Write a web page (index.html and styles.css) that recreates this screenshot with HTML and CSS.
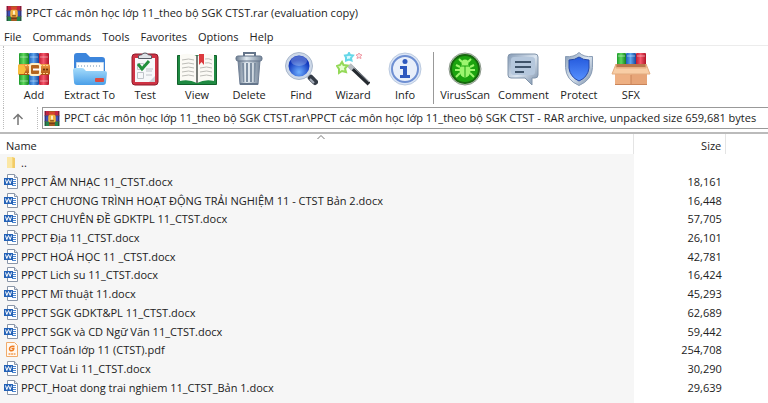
FILE: index.html
```html
<!DOCTYPE html>
<html lang="vi">
<head>
  <meta charset="UTF-8" />
  <title>PPCT các môn học lớp 11_theo bộ SGK CTST.rar (evaluation copy)</title>
  <meta name="viewport" content="width=device-width, initial-scale=1.0"/>
  <link rel="stylesheet" href="styles.css">
</head>
<body>

<svg class="sprite" aria-hidden="true">
  <defs>
    <linearGradient id="gGreen"><stop offset="0" stop-color="#1d9a2c"/><stop offset=".45" stop-color="#5fd95c"/><stop offset="1" stop-color="#128020"/></linearGradient>
    <linearGradient id="gBlue"><stop offset="0" stop-color="#1c5fb8"/><stop offset=".45" stop-color="#5fa5ee"/><stop offset="1" stop-color="#15459a"/></linearGradient>
    <linearGradient id="gRed"><stop offset="0" stop-color="#c01a30"/><stop offset=".45" stop-color="#f4566a"/><stop offset="1" stop-color="#b01226"/></linearGradient>
    <linearGradient id="gBelt" x2="0" y2="1"><stop offset="0" stop-color="#f3a04a"/><stop offset="1" stop-color="#a9500f"/></linearGradient>
    <linearGradient id="gFolder" x2="0" y2="1"><stop offset="0" stop-color="#a5dcfb"/><stop offset="1" stop-color="#4a9fe8"/></linearGradient>
    <linearGradient id="gCan"><stop offset="0" stop-color="#6f7f92"/><stop offset=".4" stop-color="#dfe8ef"/><stop offset="1" stop-color="#77879a"/></linearGradient>
    <linearGradient id="gSteel" x2="1" y2="1"><stop offset="0" stop-color="#8399b4"/><stop offset=".5" stop-color="#dce6f1"/><stop offset="1" stop-color="#7388a3"/></linearGradient>
    <radialGradient id="gLens" cy=".75"><stop offset="0" stop-color="#6fb0ff"/><stop offset="1" stop-color="#1238bd"/></radialGradient>
    <linearGradient id="gShield" x2="0" y2="1"><stop offset="0" stop-color="#2459dc"/><stop offset="1" stop-color="#5792ff"/></linearGradient>

    <symbol id="books" viewBox="0 0 16 16">
      <path fill="#c32642" d="M0 0h16v5H0z"/>
      <path fill="#3d50b8" d="M0 5h16v6H0z"/>
      <path fill="#23854a" d="M0 11h16v5H0z"/>
      <path stroke="#34203c" d="M0 5h16M0 11h16M1 0v16M15 0v16" opacity=".6"/>
      <path fill="#a65b22" d="M5 0h6v16H5z"/>
      <path fill="#d9452c" d="M5 1h6v3H5z"/>
      <rect x="4" y="4" width="8" height="8" rx="2" fill="#f0b13e"/>
      <path fill="#fff3c9" d="M7 5h2v4H7z"/>
      <path stroke="#5c2a14" d="M6 10.500h4M5 13h6"/>
    </symbol>
    <symbol id="word" viewBox="0 0 14 15">
      <path fill="#fff" stroke="#8a96a8" d="M3.500.5h7l3 3v11h-10z"/>
      <path fill="#dfe5ee" stroke="#8a96a8" d="M10.500.5v3h3"/>
      <path stroke="#4c86cf" d="M8 5.500h4M8 7.500h4M8 9.500h4M8 11.500h4"/>
      <path fill="#2462b7" d="M0 4h9v7H0z"/>
      <path fill="none" stroke="#fff" d="M1.500 5.500l1.300 4 1.700-4 1.700 4 1.300-4"/>
    </symbol>
    <symbol id="pdf" viewBox="0 0 14 15">
      <path fill="#fff8f0" stroke="#f0ab6b" d="M2.500.5h8l3 3v11h-11z"/>
      <path fill="none" stroke="#ef7d22" stroke-width="1.500" d="M10.500 4.500c-3-1-5 .3-5 2.500 0 2.500 4 2.500 4.300-.5H7.500"/>
      <path stroke="#f6b47c" stroke-width="2" d="M4.500 12h7" stroke-dasharray="2 .6"/>
    </symbol>
    <symbol id="folder" viewBox="0 0 14 15">
      <path fill="#f7d778" d="M3 2h6l2 1v10H3z"/>
      <path fill="#fbe7a5" d="M3 2h5v11H3z"/>
      <path fill="#f2cb68" d="M9 3h2v10H9z"/>
    </symbol>
  </defs>
</svg>

<header class="title-bar">
  <svg class="app-icon"><use href="#books"/></svg>
  <h1>PPCT các môn học lớp 11_theo bộ SGK CTST.rar (evaluation copy)</h1>
</header>

<nav class="menu">
  <a href="#">File</a>
  <a href="#">Commands</a>
  <a href="#">Tools</a>
  <a href="#">Favorites</a>
  <a href="#">Options</a>
  <a href="#">Help</a>
</nav>

<div class="toolbar">
  <button>
    <svg viewBox="0 0 34 34">
      <rect x="2" y="1" width="10" height="32" rx="1" fill="url(#gGreen)"/>
      <rect x="12" y="1" width="10" height="32" rx="1" fill="url(#gBlue)"/>
      <rect x="22" y="1" width="10" height="32" rx="1" fill="url(#gRed)"/>
      <path stroke="#fff" opacity=".45" d="M3 5h8M13 5h8M23 5h8M3 29h8M13 29h8M23 29h8"/>
      <rect x="1" y="12" width="32" height="11" rx="2" fill="url(#gBelt)"/>
      <path stroke="#ffd28a" stroke-dasharray="2 1" d="M2 13.500h30M2 21.500h30"/>
      <rect x="13" y="12" width="10" height="11" rx="2" fill="#b5651e" stroke="#fff0c4" stroke-width="2"/>
      <path stroke="#fff" stroke-width="2" d="M16 17.500h8"/>
      <circle cx="27" cy="17.500" r="1" fill="#5d2a08"/><circle cx="30" cy="17.500" r="1" fill="#5d2a08"/>
      <path fill="#f8bd3e" d="M1 13h6l2 4.500L7 22H1z"/>
    </svg>
    <span>Add</span>
  </button>
  <button>
    <svg viewBox="0 0 34 34">
      <path fill="#3c85dc" d="M1 4q0-3 3-3h9l4 4h12q3 0 3 3v20H1z"/>
      <path fill="#fff" stroke="#c9dcee" d="M3.500 10.500h27v18h-27z"/>
      <path stroke="#b9c8d8" stroke-dasharray="1 2" stroke-width="2" d="M5 14h24"/>
      <path fill="url(#gFolder)" d="M0 18q0-2 2-2h7q2 0 3 2l1 1h19q2 0 2 2l-1 9q0 3-3 3H4q-3 0-3-3z"/>
      <rect x="22" y="26" width="9" height="4" rx="1" fill="#d94c43"/>
    </svg>
    <span>Extract To</span>
  </button>
  <button>
    <svg viewBox="0 0 34 34">
      <rect x="4" y="2" width="26" height="31" rx="3" fill="#cf3344" stroke="#8d1b2b"/>
      <path fill="#f7f8fa" d="M7 6h20v24H7z"/>
      <path fill="#cdd2d8" d="M27 24v6h-6z"/>
      <path fill="#dfe3e7" stroke="#565b64" d="M10.500 6.500V4q0-1 2-1h1q1-2 3.500-2t3.500 2h1q2 0 2 1v2.500z"/>
      <path fill="none" stroke="#c0c4ca" d="M9.500 11.500h6v6h-6zM9.500 20.500h6v6h-6zM18 17h7M18 19h6M18 23h6"/>
      <path fill="none" stroke="#22903c" stroke-width="3" d="M10 12l4 5 7-8"/>
    </svg>
    <span>Test</span>
  </button>
  <button>
    <svg class="wide" viewBox="0 0 40 34">
      <path fill="#1f8a42" stroke="#12612b" d="M.5 3.500h39v29H.5z"/>
      <path fill="#fbfaf5" d="M3 3q9-3 17 1 8-4 17-1v26q-9-2-17 2-8-4-17-2z"/>
      <path fill="none" stroke="#bdbdb8" d="M5 8q7-2 12 0M5 12q7-2 12 0M5 16q7-2 12 0M5 20q7-2 12 0M5 24q7-2 12 0M28 7q4-1 7 1M28 11q4-1 7 1M23 16q7-2 12 0M23 20q7-2 12 0M23 24q7-2 12 0"/>
      <path stroke="#777b76" stroke-width="2" d="M20 4v27"/>
      <path fill="#dc3a3e" d="M22 2h5v11l-2.500-3-2.500 3z"/>
    </svg>
    <span>View</span>
  </button>
  <button>
    <svg viewBox="0 0 34 34">
      <path fill="none" stroke="#65758a" stroke-width="2" d="M12 4V1h11v3"/>
      <path fill="url(#gCan)" stroke="#718096" d="M6 8.500h22l-2 24H8z"/>
      <path stroke="#7d8ea1" stroke-width="2" d="M11 11l1 19M15 11v19M19 11v19M23 11l-1 19"/>
      <path stroke="#f0f5f8" d="M13 11v19M17 11v19M21 11v19"/>
      <rect x="4" y="4" width="26" height="5" rx="2" fill="url(#gCan)" stroke="#64758a"/>
      <path stroke="#64758a" stroke-width="2" d="M8 32h18"/>
    </svg>
    <span>Delete</span>
  </button>
  <button>
    <svg viewBox="0 0 34 34">
      <path stroke="#b9c2cf" stroke-width="6" d="M23 22l6 6"/>
      <path stroke="#343b46" stroke-width="6" stroke-linecap="round" d="M27 26l4 4"/>
      <path stroke="#a5adba" stroke-width="2" d="M26 27l4 4"/>
      <circle cx="15" cy="14" r="12" fill="url(#gLens)" stroke="#cdd8e8" stroke-width="3"/>
      <circle cx="15" cy="14" r="13.500" fill="none" stroke="#a9b7cb"/>
      <ellipse cx="15" cy="9" rx="8" ry="5" fill="#fff" opacity=".25"/>
    </svg>
    <span>Find</span>
  </button>
  <button>
    <svg viewBox="0 0 34 34">
      <path stroke="#252a30" stroke-width="4" d="M14 14l19 18"/>
      <path stroke="#98a0a8" d="M16 14l17 16"/>
      <path stroke="#b8bdc2" stroke-width="5" d="M13 13l4 4"/>
      <path fill="#e6ffd0" stroke="#94d958" stroke-width="2" d="M6 10l1.500 3 4 .5-2.500 3 1 3.500-4-1-3 2v-4l-2-3 3-1z"/>
      <path fill="#dcfbff" stroke="#65d7e8" stroke-width="2" d="M13 1l1 2 3 .5-2 2.500.5 2.500-2.500-1-3 1V5.500L9 3.500l3-.5z"/>
      <path fill="#ffdfe3" stroke="#f09ba6" d="M23 1l1 1.500 2 .5-1.500 1.500.5 2-2-1-2 1 .5-2L20 3l2-.5z"/>
    </svg>
    <span>Wizard</span>
  </button>
  <button>
    <svg viewBox="0 0 34 34">
      <circle cx="17" cy="17" r="16" fill="#dbe5f6" stroke="#bccbe0"/>
      <circle cx="17" cy="17" r="13" fill="#e9effa" stroke="#6e8fd2" stroke-width="2"/>
      <circle cx="17" cy="9.500" r="2.500" fill="#2e58bf"/>
      <path fill="#2e58bf" d="M12 14h7v9h3v3H12v-3h3v-6h-3z"/>
    </svg>
    <span>Info</span>
  </button>
  <hr>
  <button>
    <svg viewBox="0 0 34 34">
      <circle cx="17" cy="17" r="16" fill="#cbd6c9" stroke="#8c998b"/>
      <circle cx="17" cy="17" r="14" fill="#1ba30f" stroke="#17670f" stroke-width="2"/>
      <path fill="none" stroke="#9cf56f" stroke-width="2" d="M14 10l-3-3M20 10l3-3M12 15l-4-2M22 15l4-2M12 18H7M22 18h5M12 21l-4 4M22 21l4 4"/>
      <ellipse cx="17" cy="18.500" rx="5.500" ry="7" fill="#9cf56f"/>
      <circle cx="17" cy="11" r="3.500" fill="#9cf56f"/>
      <path stroke="#1ba30f" d="M17 14v11M12 14h10"/>
    </svg>
    <span>VirusScan</span>
  </button>
  <button>
    <svg viewBox="0 0 34 34">
      <path fill="url(#gSteel)" stroke="#8194aa" d="M5 2h24q3 0 3 3v18q0 3-3 3h-3v7l-7-7H5q-3 0-3-3V5q0-3 3-3z"/>
      <rect x="5" y="5" width="24" height="18" rx="3" fill="#b5c7dc"/>
      <path stroke="#3f5369" stroke-width="2" d="M9 10h16M9 15h16M9 20h9"/>
    </svg>
    <span>Comment</span>
  </button>
  <button>
    <svg viewBox="0 0 34 34">
      <path fill="url(#gSteel)" stroke="#8a9db6" d="M17 .5q5 5 13.500 4v11Q30 28 17 33.500 4 28 3.500 15.500v-11Q12 5.500 17 .5z"/>
      <path fill="url(#gShield)" stroke="#2448a8" d="M17 5q4 3 10 3v8q-1 9-10 13-9-4-10-13V8q6 0 10-3z"/>
    </svg>
    <span>Protect</span>
  </button>
  <button>
    <svg class="wide" viewBox="0 0 40 34">
      <rect x="6" y="1" width="9" height="15" rx="1" fill="url(#gGreen)"/>
      <rect x="15" y="1" width="10" height="15" rx="1" fill="url(#gBlue)"/>
      <rect x="25" y="1" width="10" height="15" rx="1" fill="url(#gRed)"/>
      <path stroke="#fff" opacity=".5" d="M7 4h7M16 4h8M26 4h8"/>
      <path fill="#b9784d" d="M5 12h30v4H5z"/>
      <path fill="#eeb083" d="M4 15h32v18H4z"/>
      <path fill="#dd9668" d="M20 22h16v11H20z" opacity=".4"/>
      <path fill="#f8cda5" stroke="#e3ac80" d="M5 12L1 22h38l-4-10v4H5z"/>
      <path stroke="#c98459" d="M20 23v10M4 32.500h32"/>
    </svg>
    <span>SFX</span>
  </button>
</div>

<div class="address-bar">
  <button class="up" aria-label="Up one level">
    <svg viewBox="0 0 12 12"><path fill="none" stroke="#777" stroke-width="1.500" d="M6 12V1.500M1.500 6L6 1.500 10.500 6"/></svg>
  </button>
  <label class="path">
    <svg class="app-icon"><use href="#books"/></svg>
    <input type="text" aria-label="Path" value="PPCT các môn học lớp 11_theo bộ SGK CTST.rar\PPCT các môn học lớp 11_theo bộ SGK CTST - RAR archive, unpacked size 659,681 bytes">
  </label>
</div>

<main class="file-list">
  <table>
    <thead>
      <tr>
        <th class="name">Name<svg class="sort" viewBox="0 0 8 4"><path fill="none" stroke="#777" d="M.5 4L4 .5 7.500 4"/></svg></th>
        <th class="size">Size</th>
        <th></th>
      </tr>
    </thead>
    <tbody>
      <tr><td><svg><use href="#folder"/></svg>..</td><td></td><td></td></tr>
      <tr><td><svg><use href="#word"/></svg>PPCT ÂM NHẠC 11_CTST.docx</td><td>18,161</td><td></td></tr>
      <tr><td><svg><use href="#word"/></svg>PPCT CHƯƠNG TRÌNH HOẠT ĐỘNG TRẢI NGHIỆM 11 - CTST Bản 2.docx</td><td>16,448</td><td></td></tr>
      <tr><td><svg><use href="#word"/></svg>PPCT CHUYÊN ĐỀ GDKTPL 11_CTST.docx</td><td>57,705</td><td></td></tr>
      <tr><td><svg><use href="#word"/></svg>PPCT Địa 11_CTST.docx</td><td>26,101</td><td></td></tr>
      <tr><td><svg><use href="#word"/></svg>PPCT HOÁ HỌC 11 _CTST.docx</td><td>42,781</td><td></td></tr>
      <tr><td><svg><use href="#word"/></svg>PPCT Lich su 11_CTST.docx</td><td>16,424</td><td></td></tr>
      <tr><td><svg><use href="#word"/></svg>PPCT Mĩ thuật 11.docx</td><td>45,293</td><td></td></tr>
      <tr><td><svg><use href="#word"/></svg>PPCT SGK GDKT&amp;PL 11_CTST.docx</td><td>62,689</td><td></td></tr>
      <tr><td><svg><use href="#word"/></svg>PPCT SGK và CD Ngữ Văn 11_CTST.docx</td><td>59,442</td><td></td></tr>
      <tr><td><svg><use href="#pdf"/></svg>PPCT Toán lớp 11 (CTST).pdf</td><td>254,708</td><td></td></tr>
      <tr><td><svg><use href="#word"/></svg>PPCT Vat Li 11_CTST.docx</td><td>30,290</td><td></td></tr>
      <tr><td><svg><use href="#word"/></svg>PPCT_Hoat dong trai nghiem 11_CTST_Bản 1.docx</td><td>29,639</td><td></td></tr>
    </tbody>
  </table>
</main>

</body>
</html>
```
FILE: styles.css
```css
* {
  margin: 0;
  padding: 0;
  box-sizing: border-box;
}

body {
  display: flex;
  flex-direction: column;
  min-height: 100vh;
  background: #fff;
  color: #222;
  font: 11px/16px "Open Sans", "Noto Sans", sans-serif;
}

button, input {
  border: none;
  background: none;
  color: inherit;
  font: inherit;
}

.sprite {
  position: absolute;
  width: 0;
  height: 0;
}

.app-icon {
  width: 16px;
  height: 15px;
  flex: none;
}

.title-bar {
  display: flex;
  align-items: center;
  gap: 4px;
  height: 26px;
  padding-left: 6px;
}

.title-bar h1 {
  font-size: 11px;
  font-weight: normal;
}

.menu {
  display: flex;
  gap: 11px;
  height: 20px;
  padding: 3px 4px 0;
  border-bottom: 1px solid #ececec;
}

.menu a {
  color: inherit;
  text-decoration: none;
}

.toolbar {
  display: flex;
  height: 60px;
  margin-left: 3px;
  padding: 6px 0 0 4px;
  border-left: 1px dotted #bbb;
}

.toolbar button {
  display: flex;
  flex-direction: column;
  align-items: center;
  gap: 1px;
  min-width: 52px;
  padding: 0 4px;
}

.toolbar svg {
  width: 34px;
  height: 34px;
}

.toolbar svg.wide {
  width: 40px;
}

.toolbar hr {
  width: 1px;
  height: 52px;
  margin: 0 2px;
  border: none;
  background: #999;
}

.address-bar {
  display: flex;
  height: 28px;
  padding: 1px 0 3px 3px;
  border-bottom: 2px solid #bbb;
}

.up {
  width: 35px;
  padding-right: 5px;
  border: 1px dotted #bbb;
  border-width: 0 1px;
}

.up svg {
  width: 12px;
  height: 12px;
  vertical-align: middle;
}

.path {
  display: flex;
  flex: 1;
  align-items: center;
  gap: 4px;
  margin-left: 4px;
  padding-left: 1px;
  border: 1px solid #999;
  border-right: none;
}

.path input {
  flex: 1;
  min-width: 0;
}

.file-list {
  display: flex;
  flex: 1;
  padding-bottom: 6px;
  background: linear-gradient(to right, #f6f6f6 82.5%, #fff 82.5%);
}

table {
  width: 100%;
  border-collapse: collapse;
  table-layout: fixed;
}

th {
  position: relative;
  height: 20px;
  padding-top: 3px;
  background: #fff;
  border-right: 1px solid #e4e4e4;
  font-weight: normal;
}

th:last-child {
  border: none;
}

.name {
  width: 82.5%;
  padding-left: 6px;
  text-align: left;
}

.size {
  width: 12%;
  padding-right: 4px;
  text-align: right;
}

.sort {
  position: absolute;
  top: 1px;
  left: 50%;
  width: 8px;
  height: 4px;
}

td {
  white-space: nowrap;
}

td:first-child {
  padding-left: 4px;
}

td:nth-child(2) {
  padding-right: 4px;
  text-align: right;
}

td svg {
  width: 14px;
  height: 15px;
  margin-right: 3px;
  vertical-align: top;
}
```
